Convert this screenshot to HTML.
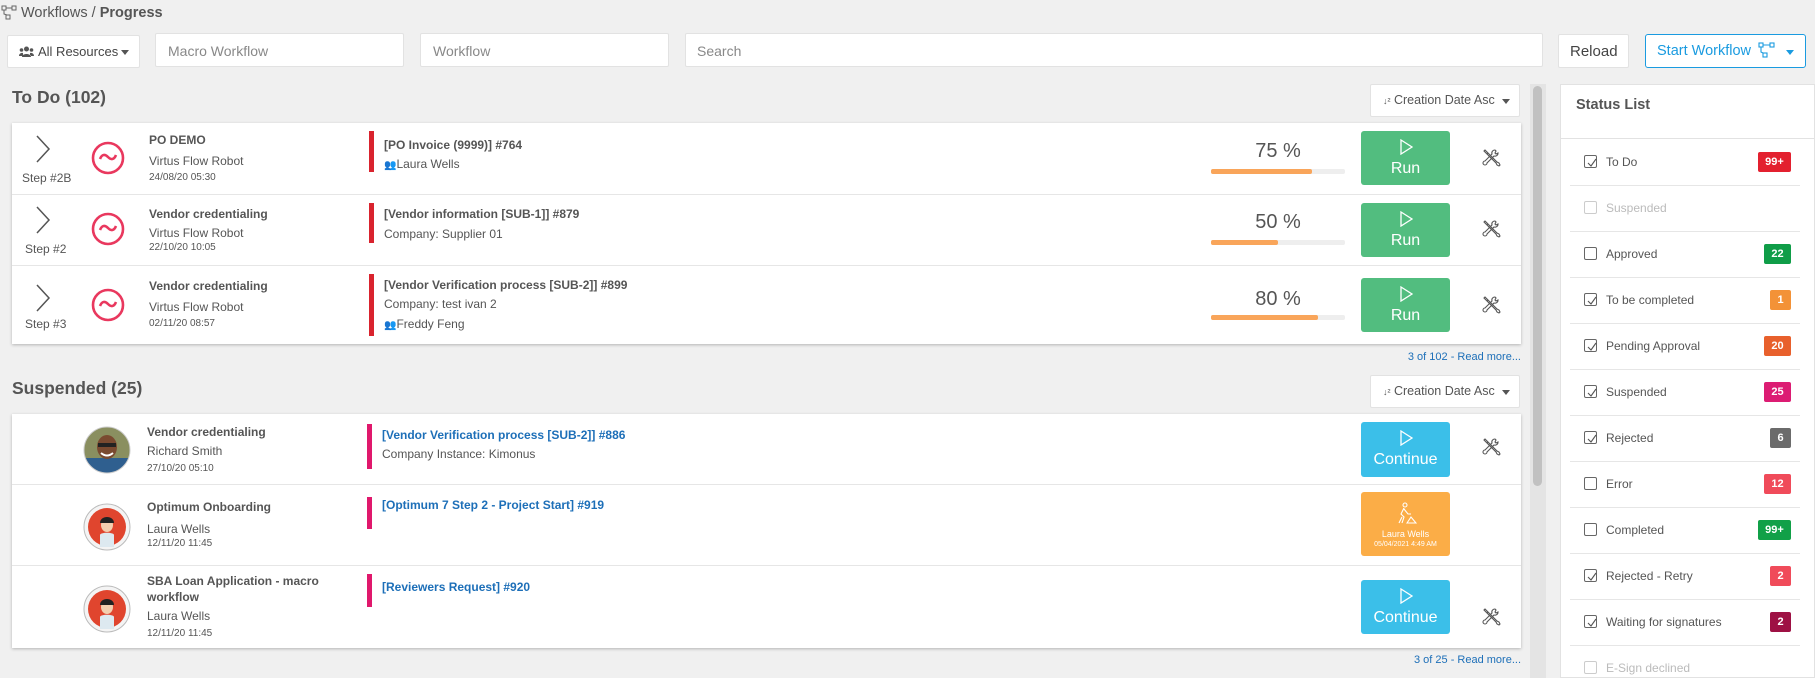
<!DOCTYPE html>
<html><head><meta charset="utf-8"><style>
*{box-sizing:border-box;margin:0;padding:0}
body{width:1815px;height:678px;overflow:hidden;background:#f0f0f0;font-family:"Liberation Sans",Arial,sans-serif;color:#555;position:relative}
.a{position:absolute;white-space:nowrap}
.box{position:absolute;background:#fff;border:1px solid #e2e2e2;border-radius:2px}
.ph{color:#888;font-size:14px}
.card{position:absolute;background:#fff;box-shadow:0 1px 3px rgba(0,0,0,.25)}
.sep{position:absolute;height:1px;background:#e6e6e6}
.t{font-size:12px;font-weight:bold;color:#555;line-height:16px}
.s{font-size:12px;color:#555;line-height:16px}
.d{font-size:10px;color:#555;line-height:14px}
.lk{font-size:12px;font-weight:bold;color:#1d6fb8;line-height:16px}
.btn{position:absolute;border-radius:3px;color:#fff;text-align:center}
.badge{position:absolute;height:20px;line-height:20px;color:#fff;font-size:11px;font-weight:bold;text-align:center;border-radius:2px}
.cb{position:absolute;width:13px;height:13px;border:1px solid #666;border-radius:2px;background:#fff}
.lbl{position:absolute;font-size:12px;color:#555;line-height:16px}
.ck{position:absolute;left:1px;top:1px}
</style></head><body>

<svg width="0" height="0" style="position:absolute"><defs>
<g id="tl" fill="none" stroke="#555" stroke-width="1.1"><path d="M3 2l3 3-1 1 9 9 1 2 2 1 1-1-1-2-2-1-9-9-1 1-3-3z"/><path d="M13 2a3 3 0 0 0-3 4L3 13a2 2 0 1 0 2 2l7-7a3 3 0 0 0 4-3l-2 1-1-1 1-2z"/></g>
<path id="ckp" d="M2 6l3 3 5-7" fill="none" stroke="#555" stroke-width="1.1"/>
</defs></svg>

<!-- breadcrumb -->
<svg class="a" style="left:1px;top:5px" width="18" height="16" viewBox="0 0 18 16" fill="none" stroke="#666" stroke-width="1"><rect x="1" y="1" width="4" height="4"/><rect x="11" y="1" width="4" height="4"/><rect x="5" y="10" width="4" height="4"/><path d="M5 3h6M3 5v4l3 1"/></svg>
<div class="a" style="left:21px;top:5px;font-size:14.5px;color:#555">Workflows / <b>Progress</b></div>

<!-- toolbar -->
<div class="box" style="left:7px;top:35px;width:133px;height:33px"></div>
<svg class="a" style="left:19px;top:46px" width="15" height="11" viewBox="0 0 15 11" fill="#555"><circle cx="7.5" cy="3" r="2.5"/><circle cx="2.5" cy="4" r="1.8"/><circle cx="12.5" cy="4" r="1.8"/><path d="M3 11c0-4 9-4 9 0zM0 10c0-3 3-3.5 4-3v3zM15 10c0-3-3-3.5-4-3v3z"/></svg>
<div class="a" style="left:38px;top:44px;font-size:13px;color:#444">All Resources</div>
<div class="a" style="left:121px;top:50px;border:4px solid transparent;border-top:5px solid #555"></div>
<div class="box" style="left:155px;top:33px;width:249px;height:34px"></div>
<div class="a ph" style="left:168px;top:43px">Macro Workflow</div>
<div class="box" style="left:420px;top:33px;width:249px;height:34px"></div>
<div class="a ph" style="left:433px;top:43px">Workflow</div>
<div class="box" style="left:685px;top:33px;width:858px;height:34px"></div>
<div class="a ph" style="left:697px;top:43px">Search</div>
<div class="box" style="left:1558px;top:34px;width:71px;height:34px"></div>
<div class="a" style="left:1570px;top:43px;font-size:15px;color:#444">Reload</div>
<div class="a" style="left:1645px;top:34px;width:161px;height:34px;border:1px solid #1a9be0;border-radius:3px;background:#fff"></div>
<div class="a" style="left:1657px;top:43px;font-size:14.5px;color:#1a9be0">Start Workflow</div>
<svg class="a" style="left:1758px;top:42px" width="18" height="17" viewBox="0 0 18 17" fill="none" stroke="#1a9be0" stroke-width="1.1"><rect x="1" y="1" width="4" height="4"/><rect x="12" y="1" width="4" height="4"/><rect x="5" y="11" width="4" height="4"/><path d="M5 3h7M3 5v5l2 1"/></svg>
<div class="a" style="left:1786px;top:50px;border:4px solid transparent;border-top:5px solid #1a9be0"></div>

<!-- To Do -->
<div class="a" style="left:12px;top:87px;font-size:17.5px;font-weight:bold;color:#555">To Do (102)</div>
<div class="box" style="left:1370px;top:84px;width:150px;height:33px"></div>
<div class="a" style="left:1383px;top:93px;font-size:12.5px;color:#555"><span style="font-size:9px">↓²</span> Creation Date Asc</div>
<div class="a" style="left:1502px;top:99px;border:4px solid transparent;border-top:5px solid #555"></div>

<div class="card" style="left:12px;top:123px;width:1509px;height:221px"></div>
<div class="sep" style="left:12px;top:194px;width:1509px"></div>
<div class="sep" style="left:12px;top:265px;width:1509px"></div>

<!-- scrollbar -->
<div class="a" style="left:1530px;top:84px;width:16px;height:594px;background:#e4e4e4"></div>
<div class="a" style="left:1533px;top:86px;width:9px;height:400px;background:#c1c1c1;border-radius:5px"></div>

<!-- Row1 -->
<svg class="a" style="left:35px;top:134px" width="16" height="30" viewBox="0 0 16 30" fill="none" stroke="#555" stroke-width="1.5"><path d="M2 2l12 13L2 28"/></svg>
<div class="a s" style="left:22px;top:170px;font-size:12px">Step #2B</div>
<svg class="a" style="left:91px;top:141px" width="34" height="34" viewBox="0 0 34 34" fill="none" stroke="#e9385e" stroke-width="2.6"><circle cx="17" cy="17" r="15"/><path d="M9 18c2-5 5-5 8-2s6 3 8-2"/></svg>
<div class="a t" style="left:149px;top:132px">PO DEMO</div>
<div class="a s" style="left:149px;top:153px">Virtus Flow Robot</div>
<div class="a d" style="left:149px;top:171px">24/08/20 05:30</div>
<div class="a" style="left:369px;top:131px;width:5px;height:41px;background:#d9232e"></div>
<div class="a t" style="left:384px;top:137px">[PO Invoice (9999)] #764</div>
<div class="a s" style="left:384px;top:156px"><span style="font-size:10px;color:#888">👥</span>Laura Wells</div>
<div class="a" style="left:1211px;top:140px;width:134px;text-align:center;font-size:20px;color:#555">75 %</div>
<div class="a" style="left:1211px;top:169px;width:134px;height:5px;background:#eee;border-radius:2px"><div style="width:75%;height:5px;background:#f9a55a;border-radius:2px"></div></div>
<div class="btn" style="left:1361px;top:131px;width:89px;height:54px;background:#52bd7f"><svg style="margin-top:8px" width="14" height="16" viewBox="0 0 14 16" fill="none" stroke="#fff" stroke-width="1.3"><path d="M2 1l11 7-11 7z"/></svg><div style="font-size:16px;line-height:18px">Run</div></div>

<!-- Row2 -->
<svg class="a" style="left:35px;top:205px" width="16" height="30" viewBox="0 0 16 30" fill="none" stroke="#555" stroke-width="1.5"><path d="M2 2l12 13L2 28"/></svg>
<div class="a s" style="left:25px;top:241px;font-size:12px">Step #2</div>
<svg class="a" style="left:91px;top:212px" width="34" height="34" viewBox="0 0 34 34" fill="none" stroke="#e9385e" stroke-width="2.6"><circle cx="17" cy="17" r="15"/><path d="M9 18c2-5 5-5 8-2s6 3 8-2"/></svg>
<div class="a t" style="left:149px;top:206px">Vendor credentialing</div>
<div class="a s" style="left:149px;top:225px">Virtus Flow Robot</div>
<div class="a d" style="left:149px;top:241px">22/10/20 10:05</div>
<div class="a" style="left:369px;top:203px;width:5px;height:40px;background:#d9232e"></div>
<div class="a t" style="left:384px;top:206px">[Vendor information [SUB-1]] #879</div>
<div class="a s" style="left:384px;top:226px">Company: Supplier 01</div>
<div class="a" style="left:1211px;top:211px;width:134px;text-align:center;font-size:20px;color:#555">50 %</div>
<div class="a" style="left:1211px;top:240px;width:134px;height:5px;background:#eee;border-radius:2px"><div style="width:50%;height:5px;background:#f9a55a;border-radius:2px"></div></div>
<div class="btn" style="left:1361px;top:203px;width:89px;height:54px;background:#52bd7f"><svg style="margin-top:8px" width="14" height="16" viewBox="0 0 14 16" fill="none" stroke="#fff" stroke-width="1.3"><path d="M2 1l11 7-11 7z"/></svg><div style="font-size:16px;line-height:18px">Run</div></div>

<!-- Row3 -->
<svg class="a" style="left:35px;top:283px" width="16" height="30" viewBox="0 0 16 30" fill="none" stroke="#555" stroke-width="1.5"><path d="M2 2l12 13L2 28"/></svg>
<div class="a s" style="left:25px;top:316px;font-size:12px">Step #3</div>
<svg class="a" style="left:91px;top:288px" width="34" height="34" viewBox="0 0 34 34" fill="none" stroke="#e9385e" stroke-width="2.6"><circle cx="17" cy="17" r="15"/><path d="M9 18c2-5 5-5 8-2s6 3 8-2"/></svg>
<div class="a t" style="left:149px;top:278px">Vendor credentialing</div>
<div class="a s" style="left:149px;top:299px">Virtus Flow Robot</div>
<div class="a d" style="left:149px;top:317px">02/11/20 08:57</div>
<div class="a" style="left:369px;top:274px;width:5px;height:62px;background:#d9232e"></div>
<div class="a t" style="left:384px;top:277px">[Vendor Verification process [SUB-2]] #899</div>
<div class="a s" style="left:384px;top:296px">Company: test ivan 2</div>
<div class="a s" style="left:384px;top:316px"><span style="font-size:10px;color:#888">👥</span>Freddy Feng</div>
<div class="a" style="left:1211px;top:288px;width:134px;text-align:center;font-size:20px;color:#555">80 %</div>
<div class="a" style="left:1211px;top:315px;width:134px;height:5px;background:#eee;border-radius:2px"><div style="width:80%;height:5px;background:#f9a55a;border-radius:2px"></div></div>
<div class="btn" style="left:1361px;top:278px;width:89px;height:54px;background:#52bd7f"><svg style="margin-top:8px" width="14" height="16" viewBox="0 0 14 16" fill="none" stroke="#fff" stroke-width="1.3"><path d="M2 1l11 7-11 7z"/></svg><div style="font-size:16px;line-height:18px">Run</div></div>

<div class="a" style="left:1400px;top:351px;width:121px;text-align:right;font-size:11px;color:#1d6fb8">3 of 102 - Read more...</div>

<!-- Suspended -->
<div class="a" style="left:12px;top:378px;font-size:17.5px;font-weight:bold;color:#555">Suspended (25)</div>
<div class="box" style="left:1370px;top:375px;width:150px;height:33px"></div>
<div class="a" style="left:1383px;top:384px;font-size:12.5px;color:#555"><span style="font-size:9px">↓²</span> Creation Date Asc</div>
<div class="a" style="left:1502px;top:390px;border:4px solid transparent;border-top:5px solid #555"></div>

<div class="card" style="left:12px;top:414px;width:1509px;height:234px"></div>
<div class="sep" style="left:12px;top:484px;width:1509px"></div>
<div class="sep" style="left:12px;top:565px;width:1509px"></div>

<!-- S row1 -->
<svg class="a" style="left:83px;top:426px" width="48" height="48" viewBox="0 0 48 48"><defs><clipPath id="c1"><circle cx="24" cy="24" r="23"/></clipPath></defs><g clip-path="url(#c1)"><rect width="48" height="48" fill="#8a8f60"/><rect y="32" width="48" height="16" fill="#2f5f8f"/><ellipse cx="24" cy="21" rx="10" ry="12" fill="#7a4a30"/><rect x="15" y="17" width="18" height="4" fill="#222"/><path d="M18 27q6 5 12 0" stroke="#fff" stroke-width="2" fill="none"/></g><circle cx="24" cy="24" r="23" fill="none" stroke="#ccc"/></svg>
<div class="a t" style="left:147px;top:424px">Vendor credentialing</div>
<div class="a s" style="left:147px;top:443px">Richard Smith</div>
<div class="a d" style="left:147px;top:462px">27/10/20 05:10</div>
<div class="a" style="left:367px;top:424px;width:5px;height:45px;background:#e0186c"></div>
<div class="a lk" style="left:382px;top:427px">[Vendor Verification process [SUB-2]] #886</div>
<div class="a s" style="left:382px;top:446px">Company Instance: Kimonus</div>
<div class="btn" style="left:1361px;top:422px;width:89px;height:55px;background:#3bbfe9"><svg style="margin-top:8px" width="14" height="16" viewBox="0 0 14 16" fill="none" stroke="#fff" stroke-width="1.3"><path d="M2 1l11 7-11 7z"/></svg><div style="font-size:16px;line-height:18px">Continue</div></div>

<!-- S row2 -->
<svg class="a" style="left:83px;top:503px" width="48" height="48" viewBox="0 0 48 48"><circle cx="24" cy="24" r="23" fill="#f4f4f4" stroke="#bbb"/><circle cx="24" cy="24" r="19" fill="#e0452e"/><path d="M17 44v-12c0-3 14-3 14 0v12z" fill="#dde9f0"/><ellipse cx="24" cy="22" rx="6" ry="7" fill="#f3cfb0"/><path d="M17 20c0-8 14-8 14 0h-14z" fill="#222"/></svg>
<div class="a t" style="left:147px;top:499px">Optimum Onboarding</div>
<div class="a s" style="left:147px;top:521px">Laura Wells</div>
<div class="a d" style="left:147px;top:537px">12/11/20 11:45</div>
<div class="a" style="left:367px;top:497px;width:5px;height:32px;background:#e0186c"></div>
<div class="a lk" style="left:382px;top:497px">[Optimum 7 Step 2 - Project Start] #919</div>
<div class="btn" style="left:1361px;top:492px;width:89px;height:64px;background:#fbad47"><svg style="margin-top:10px" width="22" height="22" viewBox="0 0 22 22" fill="none" stroke="#fff" stroke-width="1.1"><circle cx="10" cy="3" r="2"/><path d="M9 6l-3 6 3 3-2 6M9 7l4 5h3M4 21l3-6M12 21l4-6 5 6z"/></svg><div style="font-size:9px;line-height:11px">Laura Wells</div><div style="font-size:7px;line-height:10px">05/04/2021 4:49 AM</div></div>

<!-- S row3 -->
<svg class="a" style="left:83px;top:585px" width="48" height="48" viewBox="0 0 48 48"><circle cx="24" cy="24" r="23" fill="#f4f4f4" stroke="#bbb"/><circle cx="24" cy="24" r="19" fill="#e0452e"/><path d="M17 44v-12c0-3 14-3 14 0v12z" fill="#dde9f0"/><ellipse cx="24" cy="22" rx="6" ry="7" fill="#f3cfb0"/><path d="M17 20c0-8 14-8 14 0h-14z" fill="#222"/></svg>
<div class="a t" style="left:147px;top:573px">SBA Loan Application - macro</div>
<div class="a t" style="left:147px;top:589px">workflow</div>
<div class="a s" style="left:147px;top:608px">Laura Wells</div>
<div class="a d" style="left:147px;top:627px">12/11/20 11:45</div>
<div class="a" style="left:367px;top:574px;width:5px;height:33px;background:#e0186c"></div>
<div class="a lk" style="left:382px;top:579px">[Reviewers Request] #920</div>
<div class="btn" style="left:1361px;top:580px;width:89px;height:54px;background:#3bbfe9"><svg style="margin-top:8px" width="14" height="16" viewBox="0 0 14 16" fill="none" stroke="#fff" stroke-width="1.3"><path d="M2 1l11 7-11 7z"/></svg><div style="font-size:16px;line-height:18px">Continue</div></div>

<div class="a" style="left:1400px;top:654px;width:121px;text-align:right;font-size:11px;color:#1d6fb8">3 of 25 - Read more...</div>

<!-- tool icons -->
<svg class="a" style="left:1482px;top:148px" width="20" height="20"><use href="#tl"/></svg>
<svg class="a" style="left:1482px;top:219px" width="20" height="20"><use href="#tl"/></svg>
<svg class="a" style="left:1482px;top:295px" width="20" height="20"><use href="#tl"/></svg>
<svg class="a" style="left:1482px;top:437px" width="20" height="20"><use href="#tl"/></svg>
<svg class="a" style="left:1482px;top:607px" width="20" height="20"><use href="#tl"/></svg>

<!-- Status list -->
<div class="a" style="left:1560px;top:84px;width:255px;height:594px;background:#fff;border:1px solid #e2e2e2"></div>
<div class="a" style="left:1576px;top:97px;font-size:14.5px;font-weight:bold;color:#555">Status List</div>
<div class="a" style="left:1560px;top:138px;width:255px;height:1px;background:#e2e2e2"></div>

<div class="cb" style="left:1584px;top:155px"><svg class="ck" width="11" height="11"><use href="#ckp"/></svg></div><div class="lbl" style="left:1606px;top:154px">To Do</div><div class="badge" style="left:1758px;top:152px;width:33px;background:#e3202f">99+</div>
<div class="sep" style="left:1570px;top:185px;width:230px"></div>
<div class="cb" style="left:1584px;top:201px;border-color:#ccc"></div><div class="lbl" style="left:1606px;top:200px;color:#bbb">Suspended</div>
<div class="sep" style="left:1570px;top:231px;width:230px"></div>
<div class="cb" style="left:1584px;top:247px"></div><div class="lbl" style="left:1606px;top:246px">Approved</div><div class="badge" style="left:1764px;top:244px;width:27px;background:#0f9d48">22</div>
<div class="sep" style="left:1570px;top:277px;width:230px"></div>
<div class="cb" style="left:1584px;top:293px"><svg class="ck" width="11" height="11"><use href="#ckp"/></svg></div><div class="lbl" style="left:1606px;top:292px">To be completed</div><div class="badge" style="left:1770px;top:290px;width:21px;background:#f39237">1</div>
<div class="sep" style="left:1570px;top:323px;width:230px"></div>
<div class="cb" style="left:1584px;top:339px"><svg class="ck" width="11" height="11"><use href="#ckp"/></svg></div><div class="lbl" style="left:1606px;top:338px">Pending Approval</div><div class="badge" style="left:1764px;top:336px;width:27px;background:#e8602c">20</div>
<div class="sep" style="left:1570px;top:369px;width:230px"></div>
<div class="cb" style="left:1584px;top:385px"><svg class="ck" width="11" height="11"><use href="#ckp"/></svg></div><div class="lbl" style="left:1606px;top:384px">Suspended</div><div class="badge" style="left:1764px;top:382px;width:27px;background:#dc1c73">25</div>
<div class="sep" style="left:1570px;top:415px;width:230px"></div>
<div class="cb" style="left:1584px;top:431px"><svg class="ck" width="11" height="11"><use href="#ckp"/></svg></div><div class="lbl" style="left:1606px;top:430px">Rejected</div><div class="badge" style="left:1770px;top:428px;width:21px;background:#6b6b6b">6</div>
<div class="sep" style="left:1570px;top:461px;width:230px"></div>
<div class="cb" style="left:1584px;top:477px"></div><div class="lbl" style="left:1606px;top:476px">Error</div><div class="badge" style="left:1764px;top:474px;width:27px;background:#f04b5a">12</div>
<div class="sep" style="left:1570px;top:507px;width:230px"></div>
<div class="cb" style="left:1584px;top:523px"></div><div class="lbl" style="left:1606px;top:522px">Completed</div><div class="badge" style="left:1758px;top:520px;width:33px;background:#11a048">99+</div>
<div class="sep" style="left:1570px;top:553px;width:230px"></div>
<div class="cb" style="left:1584px;top:569px"><svg class="ck" width="11" height="11"><use href="#ckp"/></svg></div><div class="lbl" style="left:1606px;top:568px">Rejected - Retry</div><div class="badge" style="left:1770px;top:566px;width:21px;background:#f04b5a">2</div>
<div class="sep" style="left:1570px;top:599px;width:230px"></div>
<div class="cb" style="left:1584px;top:615px"><svg class="ck" width="11" height="11"><use href="#ckp"/></svg></div><div class="lbl" style="left:1606px;top:614px">Waiting for signatures</div><div class="badge" style="left:1770px;top:612px;width:21px;background:#9e1144">2</div>
<div class="sep" style="left:1570px;top:645px;width:230px"></div>
<div class="cb" style="left:1584px;top:661px;border-color:#ccc"></div><div class="lbl" style="left:1606px;top:660px;color:#bbb">E-Sign declined</div>

</body></html>
